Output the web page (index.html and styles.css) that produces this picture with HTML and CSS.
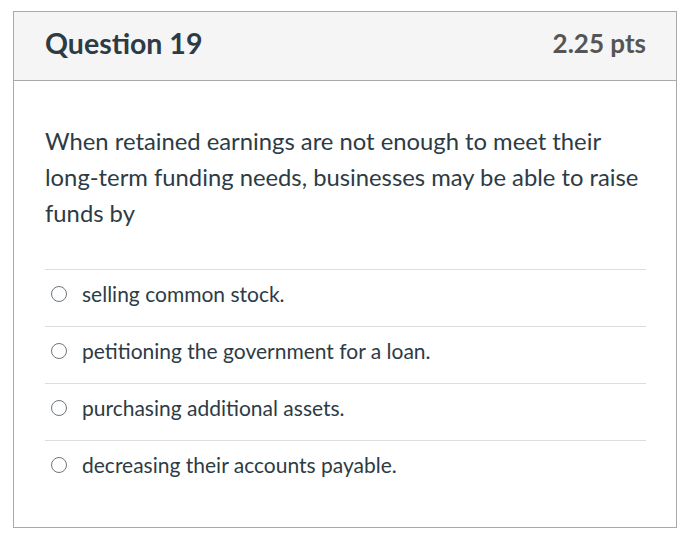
FILE: index.html
```html
<!DOCTYPE html>
<html lang="en">
<head>
<meta charset="utf-8">
<title>Question 19</title>
<link rel="stylesheet" href="styles.css">
</head>
<body>
<div class="question">
  <div class="question-header">
    <h2 class="question-title">Question 19</h2>
    <span class="question-points">2.25 pts</span>
  </div>
  <div class="question-body">
    <p class="question-text">When retained earnings are not enough to meet their long-term funding needs, businesses may be able to raise funds by</p>
    <div class="answers">
      <label class="answer"><span class="radio"></span><span class="answer-text">selling common stock.</span></label>
      <label class="answer"><span class="radio"></span><span class="answer-text">petitioning the government for a loan.</span></label>
      <label class="answer"><span class="radio"></span><span class="answer-text">purchasing additional assets.</span></label>
      <label class="answer"><span class="radio"></span><span class="answer-text">decreasing their accounts payable.</span></label>
    </div>
  </div>
</div>
</body>
</html>
```
FILE: styles.css
```css
html, body {
  margin: 0;
  padding: 0;
  background: #ffffff;
}

body {
  font-family: Lato, "Open Sans", sans-serif;
  color: #2d3b45;
}

.question {
  margin: 11px 0 0 13px;
  width: 662px;
  border: 1px solid #aaaaaa;
}

.question-header {
  box-sizing: border-box;
  display: flex;
  align-items: center;
  justify-content: space-between;
  height: 69px;
  padding: 0 30px 7px 31px;
  background: #f5f5f5;
  border-bottom: 1px solid #aaaaaa;
}

.question-title {
  margin: 0;
  font-size: 28.5px;
  font-weight: 700;
  color: #2d3b45;
}

.question-points {
  font-size: 26px;
  font-weight: 700;
  color: #555555;
}

.question-body {
  padding: 42px 30px 30px 31px;
}

.question-text {
  margin: 0 0 38px 0;
  font-size: 23.8px;
  line-height: 36px;
}

.answers {
  display: flex;
  flex-direction: column;
}

.answer {
  box-sizing: border-box;
  display: flex;
  align-items: center;
  gap: 15px;
  height: 57px;
  padding-bottom: 9px;
  border-top: 1px solid #dddddd;
  font-size: 21px;
}

.radio {
  box-sizing: border-box;
  flex: none;
  width: 16px;
  height: 16px;
  margin-left: 6px;
  border: 1px solid #6b7780;
  border-radius: 50%;
  background: #ffffff;
}
```
